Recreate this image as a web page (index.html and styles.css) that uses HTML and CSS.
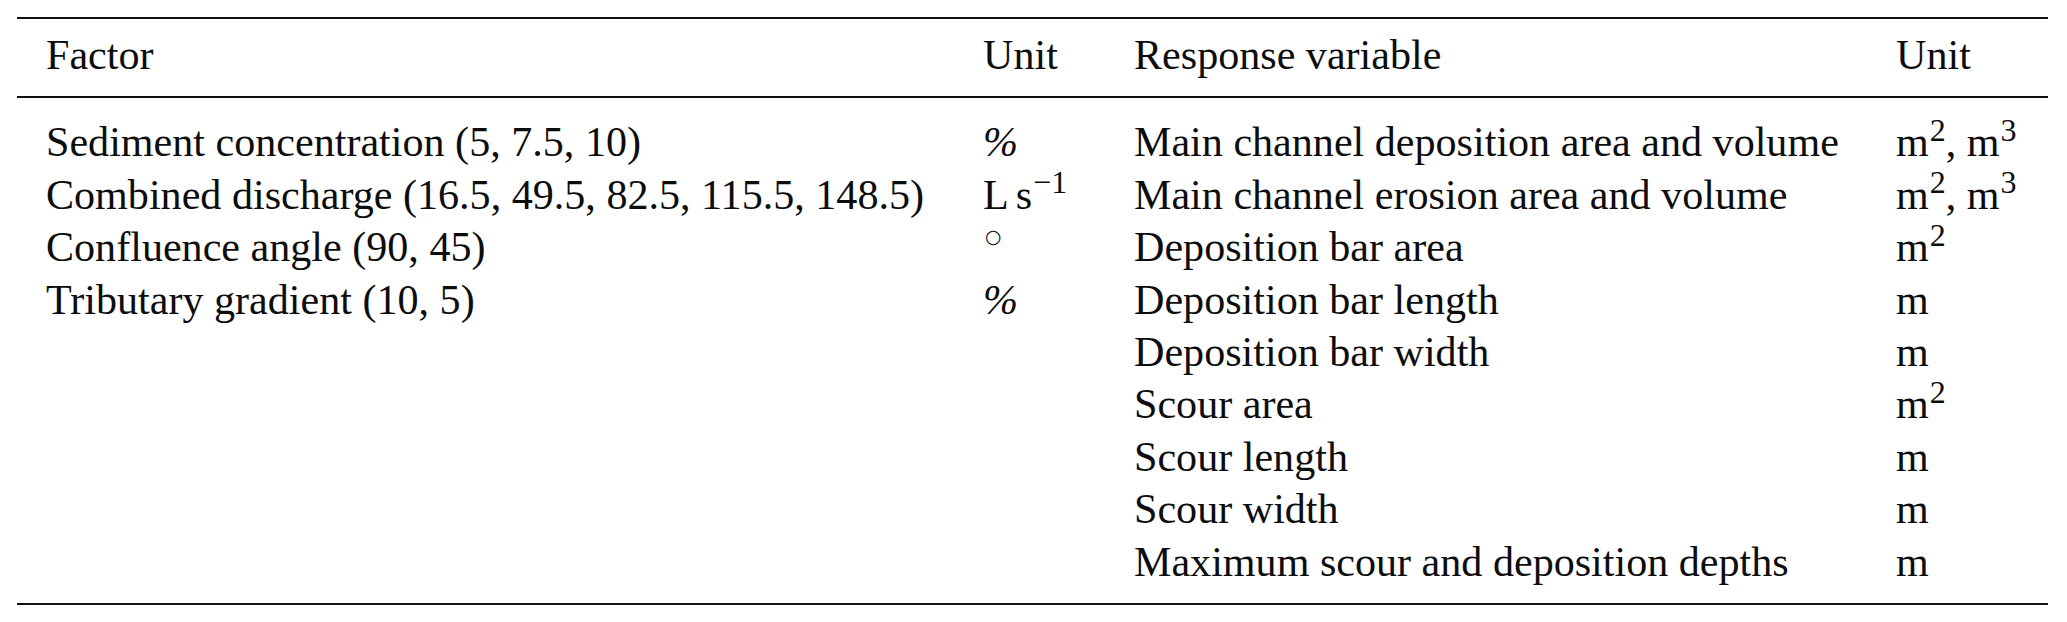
FILE: index.html
```html
<!DOCTYPE html>
<html>
<head>
<meta charset="utf-8">
<link rel="stylesheet" href="styles.css">
</head>
<body>
<div class="table">
  <div class="grid head">
    <div class="c1">Factor</div>
    <div>Unit</div>
    <div>Response variable</div>
    <div>Unit</div>
  </div>
  <div class="grid body">
    <div class="c1">Sediment concentration (5, 7.5, 10)</div>
    <div><span class="it">%</span></div>
    <div>Main channel deposition area and volume</div>
    <div>m<sup>2</sup>, m<sup>3</sup></div>

    <div class="c1">Combined discharge (16.5, 49.5, 82.5, 115.5, 148.5)</div>
    <div>L<span class="thin"></span>s<sup>−1</sup></div>
    <div>Main channel erosion area and volume</div>
    <div>m<sup>2</sup>, m<sup>3</sup></div>

    <div class="c1">Confluence angle (90, 45)</div>
    <div><span class="deg">○</span></div>
    <div>Deposition bar area</div>
    <div>m<sup>2</sup></div>

    <div class="c1">Tributary gradient (10, 5)</div>
    <div><span class="it">%</span></div>
    <div>Deposition bar length</div>
    <div>m</div>

    <div class="c1"></div>
    <div></div>
    <div>Deposition bar width</div>
    <div>m</div>

    <div class="c1"></div>
    <div></div>
    <div>Scour area</div>
    <div>m<sup>2</sup></div>

    <div class="c1"></div>
    <div></div>
    <div>Scour length</div>
    <div>m</div>

    <div class="c1"></div>
    <div></div>
    <div>Scour width</div>
    <div>m</div>

    <div class="c1"></div>
    <div></div>
    <div>Maximum scour and deposition depths</div>
    <div>m</div>
  </div>
</div>
</body>
</html>
```

FILE: styles.css
```css
html, body {
  margin: 0;
  padding: 0;
  background: #ffffff;
}

body {
  font-family: "Liberation Serif", "Times New Roman", serif;
  font-size: 42.1px;
  color: #0d0d0d;
}

.table {
  margin: 17px 0 0 17px;
  width: 2031px;
}

.grid {
  display: grid;
  grid-template-columns: 966px 151px 762px 152px;
  line-height: 52.4px;
  white-space: nowrap;
}

.head {
  border-top: 2px solid #111111;
  border-bottom: 2px solid #111111;
  padding: 10px 0 15px;
}

.body {
  padding: 18px 0 15px;
  border-bottom: 2px solid #111111;
}

.c1 {
  padding-left: 29px;
}

sup {
  font-size: 0.76em;
  line-height: 0;
  vertical-align: 0.48em;
  margin-left: 1px;
}

.thin {
  display: inline-block;
  width: 7px;
}

.it {
  font-style: italic;
}

.deg {
  font-family: "DejaVu Sans", sans-serif;
  font-size: 19px;
  line-height: 0;
  vertical-align: 0.95em;
  margin-left: 2px;
}
```
